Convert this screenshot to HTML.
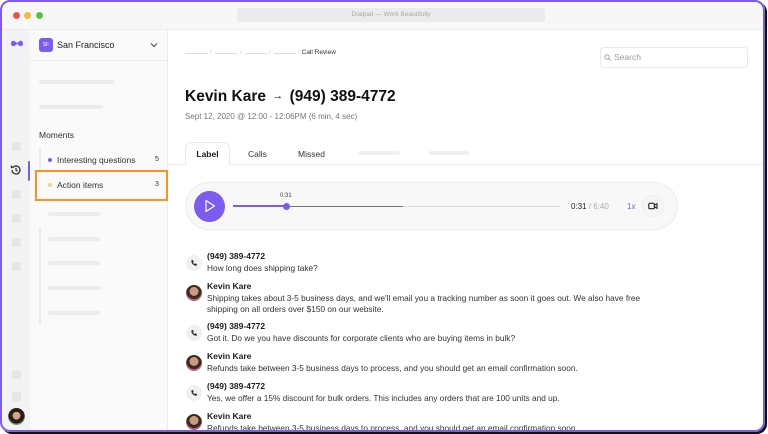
<!DOCTYPE html>
<html><head><meta charset="utf-8"><style>
*{margin:0;padding:0;box-sizing:border-box}
body{width:768px;height:434px;background:#fff;font-family:"Liberation Sans",sans-serif;position:relative;overflow:hidden;color:#1c1c1e}
.win{position:absolute;left:0;top:0;width:765px;height:432px;border-radius:10px;overflow:hidden;background:#fff;box-shadow:2px 2px 0 #111}
.frame{position:absolute;left:0;top:0;width:765px;height:432px;border:2px solid #7c5cf0;border-radius:10px;z-index:10}
.a{position:absolute}
.bar{position:absolute;height:4px;border-radius:2px;background:#ececee}
.sq{position:absolute;left:12px;width:9px;height:9px;border-radius:2px;background:#e6e6e8}
.ic{position:absolute;left:186px;width:16px;height:16px;border-radius:50%;background:#f0f0f2}
.av{position:absolute;left:186px;width:16px;height:16px;border-radius:50%;background:radial-gradient(circle at 50% 40%,#c99a80 0 35%,#3a2a22 36% 60%,#b06070 61%)}
.nm{position:absolute;left:207px;font-size:8.5px;font-weight:bold;color:#1c1c1e}
.tx{position:absolute;left:207px;font-size:8.3px;color:#333;white-space:nowrap}
</style></head><body>
<div class="win">
<div class="a" style="left:0;top:0;width:100%;height:30px;background:#f7f7f8;border-bottom:1px solid #eee"></div>
<div class="a" style="left:13px;top:12px;width:7px;height:7px;border-radius:50%;background:#f0544c"></div>
<div class="a" style="left:24px;top:12px;width:7px;height:7px;border-radius:50%;background:#f5bd30"></div>
<div class="a" style="left:36px;top:12px;width:7px;height:7px;border-radius:50%;background:#58c23e"></div>
<div class="a" style="left:237px;top:8px;width:308px;height:14px;border-radius:3px;background:#ebebed;font-size:6.5px;color:#aaa;text-align:center;line-height:14px">Dialpad — Work Beautifully</div>

<div class="a" style="left:0;top:30px;width:30px;height:404px;background:#f3f3f5"></div>
<div class="a" style="left:30px;top:30px;width:138px;height:404px;background:#fafafa;border-right:1px solid #ececee"></div>
<svg class="a" style="left:10px;top:39px" width="14" height="9" viewBox="0 0 14 9"><path d="M1 4.5C1 2 3 1 5 2.5L7 4 9 2.5C11 1 13 2 13 4.5 13 7 11 8 9 6.5L7 5 5 6.5C3 8 1 7 1 4.5Z" fill="#7c5cf0"/></svg>
<div class="sq" style="top:142px"></div>
<svg class="a" style="left:10px;top:164px" width="12" height="12" viewBox="0 0 12 12" fill="none" stroke="#333" stroke-width="1.3"><path d="M2 6a4 4 0 1 0 1.2-2.9"/><path d="M1.5 1.5v2h2"/><path d="M6 3.8V6l1.5 1.2"/></svg>
<div class="a" style="left:28px;top:161px;width:2px;height:20px;background:#7c5cf0;border-radius:1px"></div>
<div class="sq" style="top:190px"></div><div class="sq" style="top:214px"></div><div class="sq" style="top:238px"></div><div class="sq" style="top:262px"></div><div class="sq" style="top:370px"></div><div class="sq" style="top:392px"></div>
<div class="a" style="left:8px;top:408px;width:17px;height:17px;border-radius:50%;background:radial-gradient(circle at 50% 45%,#d2a487 0 30%,#2a1e18 31% 62%,#7a9a70 63%)"></div>

<div class="a" style="left:39px;top:38px;width:14px;height:14px;border-radius:3px;background:#7c5cf0;color:#fff;font-size:5px;text-align:center;line-height:14px">SF</div>
<div class="a" style="left:57px;top:40px;font-size:9px;color:#222">San Francisco</div>
<svg class="a" style="left:150px;top:42px" width="8" height="6" viewBox="0 0 8 6"><path d="M1 1.5l3 3 3-3" fill="none" stroke="#555" stroke-width="1.2"/></svg>
<div class="a" style="left:30px;top:60px;width:138px;height:1px;background:#ececee"></div>
<div class="bar" style="left:39px;top:80px;width:75px"></div>
<div class="bar" style="left:39px;top:105px;width:64px"></div>
<div class="a" style="left:39px;top:130px;font-size:8.5px;color:#333">Moments</div>
<div class="a" style="left:39px;top:148px;width:2px;height:50px;background:#ececee"></div>
<div class="a" style="left:48px;top:158px;width:4px;height:4px;border-radius:50%;background:#7c5cf0"></div>
<div class="a" style="left:57px;top:155px;font-size:8.5px;color:#333">Interesting questions</div>
<div class="a" style="left:155px;top:156px;font-size:7px;color:#333">5</div>
<div class="a" style="left:35px;top:170px;width:133px;height:31px;border:2.5px solid #f7931e;background:#fafafa"></div>
<div class="a" style="left:48px;top:183px;width:4px;height:4px;border-radius:50%;background:#f7d478"></div>
<div class="a" style="left:57px;top:180px;font-size:8.5px;color:#333">Action items</div>
<div class="a" style="left:155px;top:181px;font-size:7px;color:#333">3</div>
<div class="bar" style="left:48px;top:212px;width:52px"></div>
<div class="a" style="left:39px;top:227px;width:2px;height:98px;background:#ececee"></div>
<div class="bar" style="left:48px;top:237px;width:52px"></div>
<div class="bar" style="left:48px;top:261px;width:52px"></div>
<div class="bar" style="left:48px;top:286px;width:52px"></div>
<div class="bar" style="left:48px;top:311px;width:52px"></div>

<div class="a" style="left:185px;top:53px;width:23px;height:1px;background:#ddd"></div>
<div class="a" style="left:215px;top:53px;width:22px;height:1px;background:#ddd"></div>
<div class="a" style="left:245px;top:53px;width:22px;height:1px;background:#ddd"></div>
<div class="a" style="left:274px;top:53px;width:22px;height:1px;background:#ddd"></div>
<div class="a" style="left:210px;top:49px;font-size:6.5px;color:#ccc">/</div><div class="a" style="left:240px;top:49px;font-size:6.5px;color:#ccc">/</div><div class="a" style="left:269px;top:49px;font-size:6.5px;color:#ccc">/</div>
<div class="a" style="left:298px;top:49px;font-size:6.5px;color:#333"><span style="color:#ccc">/</span> Call Review</div>
<div class="a" style="left:600px;top:47px;width:148px;height:21px;border:1px solid #e8e8ea;border-radius:4px;font-size:8.5px;color:#999;line-height:19px;padding-left:13px">Search</div>
<svg class="a" style="left:604px;top:54px" width="7" height="7" viewBox="0 0 7 7" fill="none" stroke="#999" stroke-width="0.9"><circle cx="3" cy="3" r="2.2"/><path d="M4.6 4.6L6.5 6.5"/></svg>

<div class="a" style="left:185px;top:88px;font-size:15.5px;font-weight:bold;color:#111;white-space:nowrap">Kevin Kare <span style="font-size:11px;position:relative;top:-2px;margin:0 2px">→</span> (949) 389-4772</div>
<div class="a" style="left:185px;top:112px;font-size:8px;color:#777">Sept 12, 2020 @ 12:00 - 12:06PM (6 min, 4 sec)</div>

<div class="a" style="left:168px;top:164px;width:600px;height:1px;background:#ececee"></div>
<div class="a" style="left:185px;top:142px;width:45px;height:23px;border:1px solid #e8e8ea;border-bottom:none;border-radius:6px 6px 0 0;background:#fff;font-size:8.5px;font-weight:bold;text-align:center;line-height:22px">Label</div>
<div class="a" style="left:248px;top:149px;font-size:8.5px;color:#333">Calls</div>
<div class="a" style="left:298px;top:149px;font-size:8.5px;color:#333">Missed</div>
<div class="bar" style="left:358px;top:151px;width:42px;background:#f0f0f2"></div>
<div class="bar" style="left:429px;top:151px;width:40px;background:#f0f0f2"></div>

<div class="a" style="left:185px;top:182px;width:493px;height:48px;border:1px solid #ececee;border-radius:24px;background:#f8f8f9"></div>
<div class="a" style="left:194px;top:191px;width:31px;height:31px;border-radius:50%;background:#7c5cf0"></div>
<svg class="a" style="left:204px;top:199px" width="12" height="14" viewBox="0 0 12 14"><path d="M2 1.5L10.5 7 2 12.5Z" fill="none" stroke="#fff" stroke-width="1.2" stroke-linejoin="round"/></svg>
<div class="a" style="left:233px;top:206px;width:327px;height:1px;background:#dcdcde"></div>
<div class="a" style="left:286px;top:206px;width:117px;height:1px;background:#777"></div>
<div class="a" style="left:233px;top:205px;width:53px;height:2px;background:#7c5cf0"></div>
<div class="a" style="left:283px;top:203px;width:7px;height:7px;border-radius:50%;background:#7c5cf0"></div>
<div class="a" style="left:280px;top:193px;font-size:6px;color:#444">0:31</div>
<div class="a" style="left:571px;top:202px;font-size:8px;color:#222">0:31 <span style="color:#aaa">/ 6:40</span></div>
<div class="a" style="left:627px;top:202px;font-size:8px;color:#7c5cf0">1x</div>
<div class="a" style="left:642px;top:195px;width:22px;height:22px;border-radius:50%;background:#f5f5f6;border:1px solid #eee"></div>
<svg class="a" style="left:648px;top:202px" width="10" height="8" viewBox="0 0 10 8" fill="none" stroke="#222" stroke-width="1.1"><rect x="0.8" y="1.3" width="5.5" height="5.4" rx="1"/><path d="M6.3 3.2L9 1.8v4.4L6.3 4.8"/></svg>

<div class="ic" style="top:255px"></div><div class="nm" style="top:251px">(949) 389-4772</div><div class="tx" style="top:263px">How long does shipping take?</div>
<div class="av" style="top:285px"></div><div class="nm" style="top:281px">Kevin Kare</div><div class="tx" style="top:293px">Shipping takes about 3-5 business days, and we'll email you a tracking number as soon it goes out. We also have free</div><div class="tx" style="top:304px">shipping on all orders over $150 on our website.</div>
<div class="ic" style="top:325px"></div><div class="nm" style="top:321px">(949) 389-4772</div><div class="tx" style="top:333px">Got it. Do we you have discounts for corporate clients who are buying items in bulk?</div>
<div class="av" style="top:355px"></div><div class="nm" style="top:351px">Kevin Kare</div><div class="tx" style="top:363px">Refunds take between 3-5 business days to process, and you should get an email confirmation soon.</div>
<div class="ic" style="top:385px"></div><div class="nm" style="top:381px">(949) 389-4772</div><div class="tx" style="top:393px">Yes, we offer a 15% discount for bulk orders. This includes any orders that are 100 units and up.</div>
<div class="av" style="top:414px"></div><div class="nm" style="top:411px">Kevin Kare</div><div class="tx" style="top:423px">Refunds take between 3-5 business days to process, and you should get an email confirmation soon.</div>
<svg class="a" style="left:190px;top:259px" width="8" height="8" viewBox="0 0 8 8"><path d="M1.5 1.2l1.3-.3 1 1.6-.8.7c.4.9 1 1.5 1.8 1.8l.7-.8 1.6 1-.3 1.3C4 7.4 .6 4 1.5 1.2Z" fill="#333"/></svg>
<svg class="a" style="left:190px;top:329px" width="8" height="8" viewBox="0 0 8 8"><path d="M1.5 1.2l1.3-.3 1 1.6-.8.7c.4.9 1 1.5 1.8 1.8l.7-.8 1.6 1-.3 1.3C4 7.4 .6 4 1.5 1.2Z" fill="#333"/></svg>
<svg class="a" style="left:190px;top:389px" width="8" height="8" viewBox="0 0 8 8"><path d="M1.5 1.2l1.3-.3 1 1.6-.8.7c.4.9 1 1.5 1.8 1.8l.7-.8 1.6 1-.3 1.3C4 7.4 .6 4 1.5 1.2Z" fill="#333"/></svg>
</div>
<div class="frame"></div>
</body></html>
